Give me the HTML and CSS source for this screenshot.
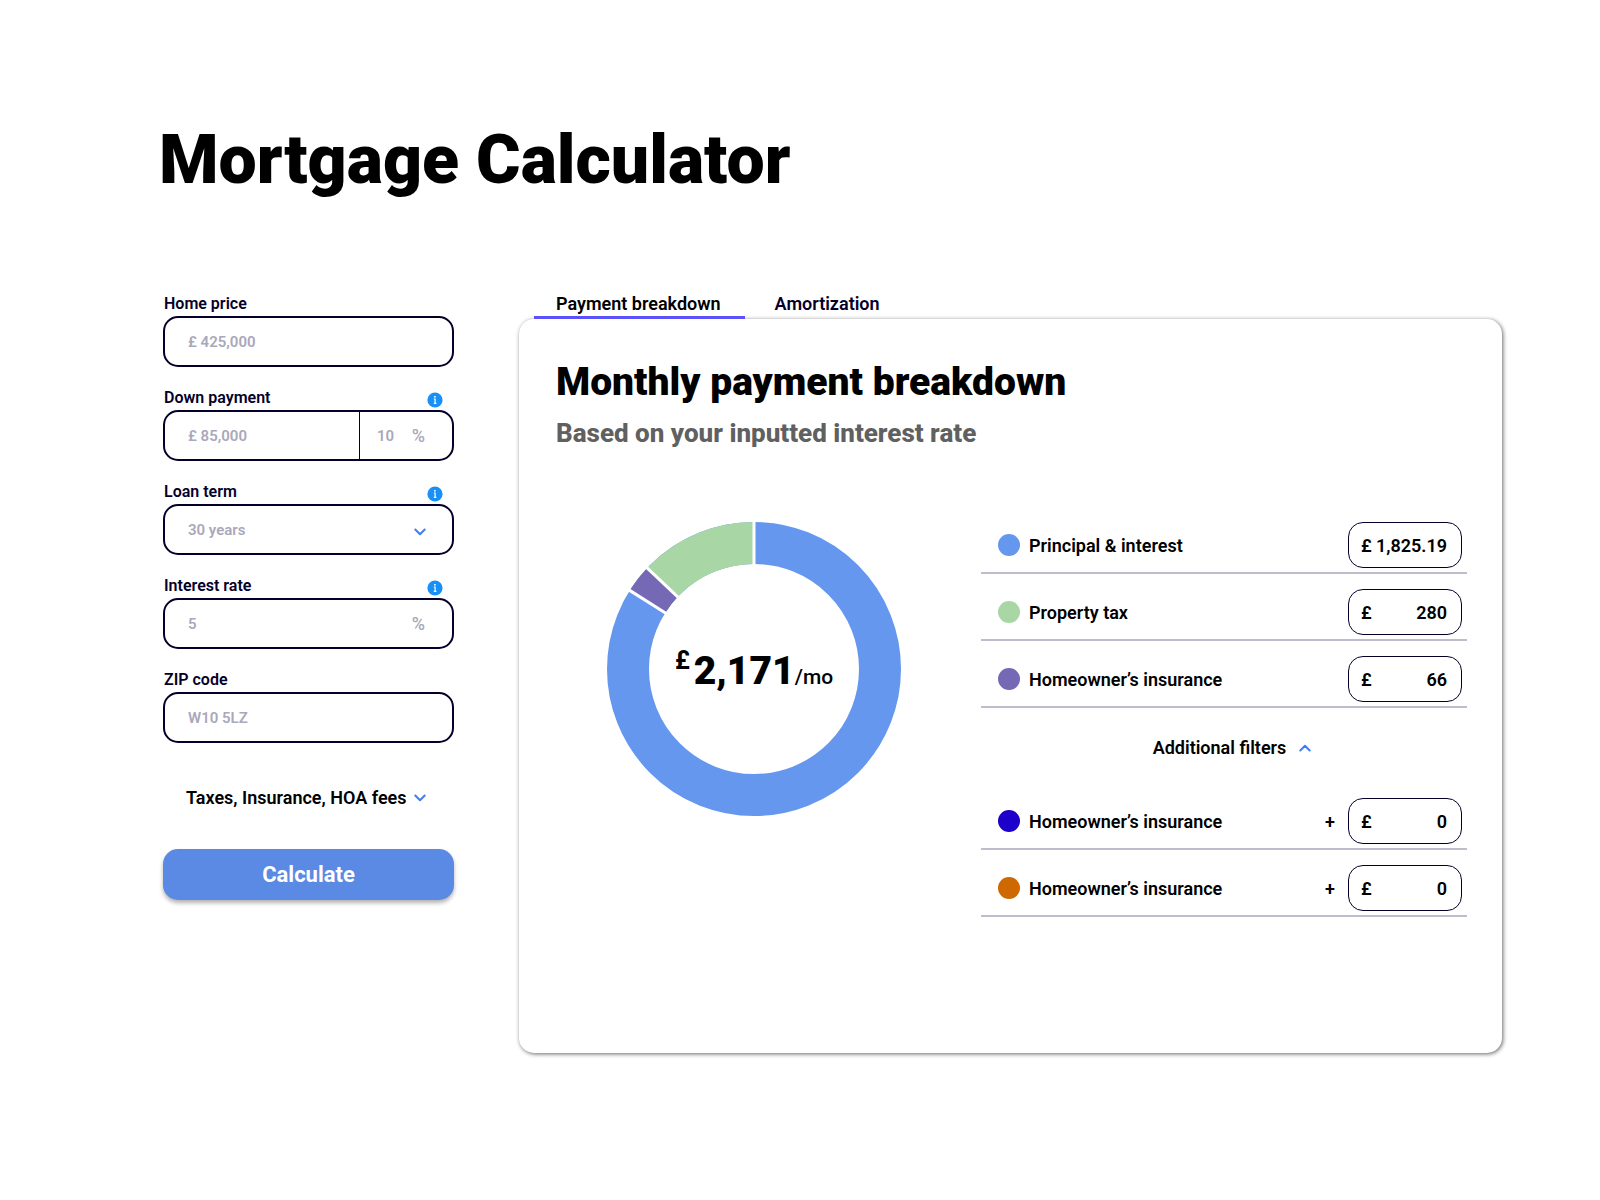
FILE: index.html
```html
<!DOCTYPE html>
<html lang="en">
<head>
<meta charset="utf-8">
<meta name="viewport" content="width=device-width, initial-scale=1">
<title>Mortgage Calculator</title>
<link rel="stylesheet" href="styles.css">
</head>
<body>
<svg class="sprite" aria-hidden="true">
  <symbol id="info" viewBox="0 0 16 16">
    <circle cx="8" cy="8" r="7.6" fill="#1890f8"/>
    <rect x="7" y="3.900" width="1.800" height="1.700" rx=".6" fill="#fff"/>
    <path d="M6.800 7h1.300v4.300M6.800 11.400h2.600" fill="none" stroke="#fff" stroke-width="1.200"/>
  </symbol>
  <symbol id="chevron" viewBox="0 0 12 8">
    <path d="M1.300 1.500 6 6.200l4.700-4.700" fill="none" stroke="#3f7fee" stroke-width="2" stroke-linecap="round" stroke-linejoin="round"/>
  </symbol>
</svg>
<main class="page">
  <h1 class="title">Mortgage Calculator</h1>
  <div class="columns">
    <form class="form">
      <div class="field">
        <div class="field-head"><label for="price">Home price</label></div>
        <div class="box"><input id="price" type="text" placeholder="£ 425,000"></div>
      </div>
      <div class="field">
        <div class="field-head"><label for="down">Down payment</label><svg class="info"><use href="#info"/></svg></div>
        <div class="box">
          <input id="down" type="text" placeholder="£ 85,000">
          <div class="percent">
            <input type="text" placeholder="10" aria-label="Down payment percent">
            <span class="unit">%</span>
          </div>
        </div>
      </div>
      <div class="field">
        <div class="field-head"><label for="term">Loan term</label><svg class="info"><use href="#info"/></svg></div>
        <div class="box">
          <select id="term"><option>30 years</option><option>25 years</option><option>15 years</option></select>
          <svg class="chevron select-chevron"><use href="#chevron"/></svg>
        </div>
      </div>
      <div class="field">
        <div class="field-head"><label for="rate">Interest rate</label><svg class="info"><use href="#info"/></svg></div>
        <div class="box"><input id="rate" type="text" placeholder="5"><span class="unit">%</span></div>
      </div>
      <div class="field">
        <div class="field-head"><label for="zip">ZIP code</label></div>
        <div class="box"><input id="zip" type="text" placeholder="W10 5LZ"></div>
      </div>
      <button class="toggle fees" type="button">Taxes, Insurance, HOA fees <svg class="chevron"><use href="#chevron"/></svg></button>
      <button class="calculate" type="button">Calculate</button>
    </form>

    <section class="results">
      <div class="tabs" role="tablist">
        <button class="tab tab-active" type="button" role="tab" aria-selected="true">Payment breakdown</button>
        <button class="tab" type="button" role="tab" aria-selected="false">Amortization</button>
      </div>
      <div class="card">
        <h2 class="heading">Monthly payment breakdown</h2>
        <p class="subheading">Based on your inputted interest rate</p>
        <div class="breakdown">
          <div class="donut">
            <svg class="ring" viewBox="0 0 294 294" aria-hidden="true">
              <g fill="none" stroke-width="42" transform="rotate(-90 147 147)">
                <circle cx="147" cy="147" r="126" stroke="#6597ee"/>
                <circle cx="147" cy="147" r="126" stroke="#7569b6" pathLength="3600" stroke-dasharray="0 3023 111 466"/>
                <circle cx="147" cy="147" r="126" stroke="#a8d7a5" pathLength="3600" stroke-dasharray="0 3134 466 0"/>
              </g>
              <g stroke="#fff" stroke-width="3">
                <path d="M147 -2V46"/>
                <path d="M147 -2V46" transform="rotate(-57.7 147 147)"/>
                <path d="M147 -2V46" transform="rotate(-46.6 147 147)"/>
              </g>
            </svg>
            <p class="total"><span class="currency">£</span><strong class="sum">2,171</strong><span class="period">/mo</span></p>
          </div>
          <div class="list">
            <div class="row"><span class="dot principal"></span><label for="a1">Principal &amp; interest</label>
              <div class="amount"><span>£</span><input id="a1" type="text" value="1,825.19"></div></div>
            <div class="row"><span class="dot tax"></span><label for="a2">Property tax</label>
              <div class="amount"><span>£</span><input id="a2" type="text" value="280"></div></div>
            <div class="row"><span class="dot insurance"></span><label for="a3">Homeowner’s insurance</label>
              <div class="amount"><span>£</span><input id="a3" type="text" value="66"></div></div>
            <button class="toggle filters" type="button">Additional filters <svg class="chevron chevron-up"><use href="#chevron"/></svg></button>
            <div class="row"><span class="dot extra-one"></span><label for="a4">Homeowner’s insurance</label><span class="plus">+</span>
              <div class="amount"><span>£</span><input id="a4" type="text" value="0"></div></div>
            <div class="row"><span class="dot extra-two"></span><label for="a5">Homeowner’s insurance</label><span class="plus">+</span>
              <div class="amount"><span>£</span><input id="a5" type="text" value="0"></div></div>
          </div>
        </div>
      </div>
    </section>
  </div>
</main>
</body>
</html>
```
FILE: styles.css
```css
* { box-sizing: border-box; }

body {
  margin: 0;
  background: #fff;
  color: #000;
  font-family: Roboto, "Liberation Sans", sans-serif;
  font-size: 18px;
  font-weight: 600;
}

h1, h2, p { margin: 0; }

button, input, select {
  margin: 0;
  padding: 0;
  border: 0;
  background: none;
  color: inherit;
  font: inherit;
  border-radius: 0;
}

button { cursor: pointer; }

.sprite { display: none; }

.page { padding: 120px 98px 80px 163px; }

.title {
  margin: 0 0 94px -4px;
  font-size: 68px;
  line-height: 80px;
  font-weight: 900;
}

.columns {
  display: flex;
  align-items: flex-start;
  gap: 65px;
}

.form {
  flex: 0 0 291px;
  min-width: 0;
  display: flex;
  flex-direction: column;
}

.field { margin-bottom: 21px; }

.field-head {
  display: flex;
  align-items: flex-end;
  justify-content: space-between;
  padding: 0 11px 2px 1px;
  color: #05002a;
  font-size: 16px;
  line-height: 20px;
}

.info {
  width: 16px;
  height: 16px;
}

.box {
  position: relative;
  display: flex;
  align-items: stretch;
  height: 51px;
  border: 2px solid #05002a;
  border-radius: 15px;
  color: #aaa8ba;
  font-size: 15px;
  overflow: hidden;
}

.box input, .box select {
  flex: 1;
  width: 0;
  min-width: 0;
  padding-left: 23px;
  appearance: none;
}

.box input::placeholder {
  color: #aaa8ba;
  opacity: 1;
}

.percent {
  flex: 0 0 93px;
  display: flex;
  border-left: 1px solid #05002a;
}

.box .percent input { padding-left: 17px; }

.unit {
  align-self: center;
  padding-right: 27px;
  font-size: 18px;
  font-weight: 500;
}

.chevron {
  flex: none;
  width: 12px;
  height: 8px;
}

.chevron-up { transform: rotate(180deg); }

.select-chevron {
  position: absolute;
  right: 26px;
  top: 22px;
  pointer-events: none;
}

.toggle {
  display: flex;
  align-items: center;
  gap: 7px;
  line-height: 24px;
}

.fees { margin: 22px 0 39px 23px; }

.calculate {
  height: 51px;
  border-radius: 15px;
  background: #5a8ae4;
  box-shadow: 0 3px 4px rgba(0, 0, 0, .3);
  color: #fff;
  font-size: 22px;
  font-weight: 700;
}

.results {
  flex: 1;
  min-width: 0;
}

.tabs {
  display: flex;
  gap: 8px;
  padding-left: 15px;
}

.tab {
  padding: 0 22px 2px;
  border-bottom: 3px solid transparent;
  color: #05002a;
  line-height: 20px;
}

.tab-active {
  padding-right: 24px;
  border-color: #5b52fb;
  color: #000;
}

.card {
  padding: 39px 35px 136px 37px;
  border-radius: 15px;
  background: #fff;
  box-shadow: 1px 1px 4px rgba(0, 0, 0, .6);
}

.heading {
  margin-bottom: 11px;
  font-size: 39px;
  line-height: 48px;
  font-weight: 900;
}

.subheading {
  margin-bottom: 58px;
  color: #606060;
  font-size: 26px;
  line-height: 32px;
  font-weight: 800;
}

.breakdown {
  display: flex;
  align-items: flex-start;
  gap: 80px;
}

.donut {
  flex: 0 0 294px;
  display: grid;
  margin: 15px 0 0 51px;
}

.ring, .total { grid-area: 1 / 1; }

.ring { width: 100%; }

.total {
  align-self: center;
  justify-self: center;
  display: flex;
  align-items: baseline;
  padding-top: 3px;
}

.currency {
  align-self: flex-start;
  margin-right: 4px;
  font-size: 25px;
  line-height: 27px;
  font-weight: 700;
}

.sum {
  font-size: 39px;
  line-height: 48px;
  font-weight: 900;
}

.period {
  font-size: 21px;
  font-weight: 500;
}

.list {
  flex: 1;
  min-width: 0;
}

.row {
  display: flex;
  align-items: center;
  padding: 15px 5px 4px 17px;
  border-bottom: 2px solid #bebccd;
}

.row label {
  flex: 1;
  margin-left: 9px;
}

.dot {
  flex: none;
  width: 22px;
  height: 22px;
  border-radius: 50%;
}

.principal { background: #6597ee; }
.tax { background: #a8d7a5; }
.insurance { background: #7569b6; }
.extra-one { background: #1d00c9; }
.extra-two { background: #cd6900; }

.plus { margin-right: 13px; }

.amount {
  flex: none;
  display: flex;
  align-items: center;
  width: 114px;
  height: 46px;
  padding: 0 14px 0 12px;
  border: 1px solid #05002a;
  border-radius: 15px;
}

.amount input {
  flex: 1;
  width: 0;
  min-width: 0;
  text-align: right;
}

.filters {
  gap: 13px;
  margin: 0 auto;
  padding: 28px 0 23px 16px;
}
```
